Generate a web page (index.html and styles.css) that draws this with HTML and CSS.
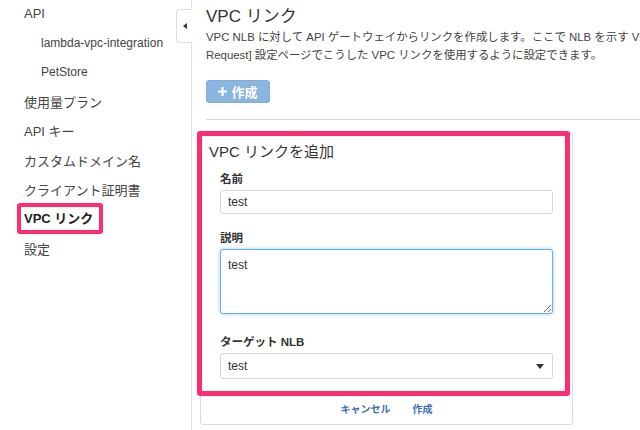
FILE: index.html
```html
<!DOCTYPE html>
<html lang="ja">
<head>
    <meta charset="UTF-8">
    <title>VPC リンク</title>
    <link rel="stylesheet" href="styles.css">
</head>
<body>
    <div class="layout">
        <nav class="sidebar">
            <ul class="nav">
                <li class="nav-item">API</li>
                <li class="nav-item sub">lambda-vpc-integration</li>
                <li class="nav-item sub">PetStore</li>
                <li class="nav-item">使用量プラン</li>
                <li class="nav-item">API キー</li>
                <li class="nav-item">カスタムドメイン名</li>
                <li class="nav-item">クライアント証明書</li>
                <li class="nav-item"><span class="nav-active">VPC リンク</span></li>
                <li class="nav-item">設定</li>
            </ul>
            <div class="collapse-tab"><span class="arrow-left"></span></div>
        </nav>

        <main class="content">
            <h1>VPC リンク</h1>
            <p class="intro">VPC NLB に対して API ゲートウェイからリンクを作成します。ここで NLB を示す VPC リンクを作成すると、[Integration<br>Request] 設定ページでこうした VPC リンクを使用するように設定できます。</p>

            <button class="btn-create" disabled>
                <svg width="9" height="9" viewBox="0 0 9 9"><path d="M4.5 0v9M0 4.5h9" stroke="#fff" stroke-width="2.2"/></svg>
                作成
            </button>

            <hr class="divider">

            <div class="panel">
                <div class="panel-body">
                    <h2>VPC リンクを追加</h2>

                    <label class="field-label first">名前</label>
                    <input class="field-input" type="text" value="test">

                    <label class="field-label second">説明</label>
                    <textarea class="field-textarea">test</textarea>

                    <label class="field-label third">ターゲット NLB</label>
                    <div class="select-wrap">
                        <select class="field-select"><option>test</option></select>
                        <span class="caret"></span>
                    </div>
                </div>
                <div class="panel-footer">
                    <a href="#">キャンセル</a>
                    <a href="#">作成</a>
                </div>
                <div class="highlight"></div>
            </div>
        </main>
    </div>
</body>
</html>
```

FILE: styles.css
```css
body {
    margin: 0;
    font-family: "Liberation Sans", "Noto Sans CJK JP", sans-serif;
    color: #444;
    background: #fff;
    overflow: hidden;
}
.layout {
    display: flex;
    width: 640px;
    height: 430px;
}

/* sidebar */
.sidebar {
    position: relative;
    width: 191px;
    flex-shrink: 0;
    border-right: 1px solid #e3e3e3;
}
.nav {
    list-style: none;
    margin: -1px 0 0;
    padding: 0 0 0 24px;
}
.nav-item {
    height: 29.3px;
    display: flex;
    align-items: center;
    font-size: 13px;
    color: #444;
}
.nav-item.sub {
    padding-left: 17px;
    font-size: 12px;
}
.nav-active {
    margin-left: -7px;
    padding: 1px 6px 1px 3px;
    line-height: 21px;
    border: 4px solid #ff2d6f;
    border-radius: 3px;
    font-weight: bold;
    color: #222;
}
.collapse-tab {
    position: absolute;
    top: 9px;
    right: -1px;
    width: 15px;
    height: 32px;
    background: #fff;
    border: 1px solid #dcdcdc;
    border-right: none;
    border-radius: 4px 0 0 4px;
    display: flex;
    align-items: center;
    justify-content: center;
}
.arrow-left {
    width: 0;
    height: 0;
    border-top: 3px solid transparent;
    border-bottom: 3px solid transparent;
    border-right: 4px solid #333;
}

/* main */
.content {
    flex: 1;
    min-width: 0;
    padding-left: 14px;
    overflow: hidden;
}
h1 {
    margin: 0;
    padding-top: 6px;
    font-size: 17px;
    font-weight: normal;
    line-height: 22px;
    color: #333;
}
.intro {
    margin: 0;
    font-size: 11.4px;
    line-height: 18px;
    white-space: nowrap;
}
.btn-create {
    margin-top: 16px;
    width: 64px;
    height: 23px;
    display: flex;
    align-items: center;
    justify-content: center;
    gap: 4px;
    background: #8ab5df;
    border: 1px solid #80acd8;
    border-radius: 3px;
    color: #fff;
    font-family: inherit;
    font-size: 13px;
    font-weight: bold;
    padding: 0;
}
.divider {
    margin: 16px 0 0;
    border: 0;
    border-top: 1px solid #dcdcdc;
}

/* panel */
.panel {
    position: relative;
    margin: 12px 0 0 -6px;
    width: 373px;
    box-sizing: border-box;
    border: 1px solid #dcdcdc;
    border-radius: 3px;
}
.panel-body {
    padding: 9px 19px 13px;
}
.panel-body h2 {
    margin: 0 0 0 -11px;
    font-size: 15px;
    font-weight: normal;
    line-height: 20px;
    color: #333;
}
.field-label {
    display: block;
    margin-bottom: 3px;
    font-size: 11.5px;
    font-weight: bold;
    line-height: 16px;
    color: #333;
}
.field-label.first { margin-top: 9px; }
.field-label.second { margin-top: 15.5px; }
.field-label.third { margin-top: 20.5px; }
.field-input,
.field-textarea,
.field-select {
    display: block;
    width: 100%;
    box-sizing: border-box;
    border: 1px solid #d6d6d6;
    border-radius: 3px;
    background: #fff;
    font-family: inherit;
    font-size: 12px;
    color: #333;
    margin: 0;
    outline: none;
}
.field-input {
    height: 24px;
    padding: 0 7px;
}
.field-textarea {
    height: 65px;
    padding: 6px 7px;
    line-height: 18px;
    border-color: #66afe9;
    box-shadow: 0 0 4px rgba(102, 175, 233, 0.6);
    resize: vertical;
}
.select-wrap {
    position: relative;
}
.field-select {
    height: 26px;
    padding: 0 7px;
    appearance: none;
    -webkit-appearance: none;
}
.caret {
    position: absolute;
    right: 9px;
    top: 11px;
    width: 0;
    height: 0;
    border-left: 4px solid transparent;
    border-right: 4px solid transparent;
    border-top: 5px solid #333;
}
.panel-footer {
    height: 32px;
    display: flex;
    align-items: center;
    justify-content: center;
    gap: 22px;
}
.panel-footer a {
    font-size: 10px;
    font-weight: bold;
    color: #3a70b6;
    text-decoration: none;
}
.highlight {
    position: absolute;
    left: -4px;
    top: -2px;
    width: 373px;
    height: 265px;
    box-sizing: border-box;
    border: 5px solid #ff2d6f;
    border-radius: 3px;
    pointer-events: none;
}
```
